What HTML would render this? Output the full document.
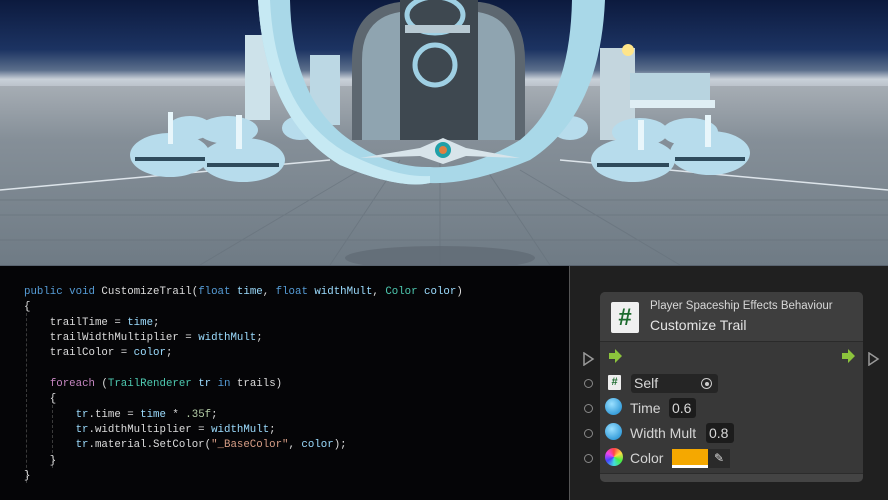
<!DOCTYPE html>
<html><head><meta charset="utf-8"><style>
*{margin:0;padding:0;box-sizing:border-box}
body{width:888px;height:500px;overflow:hidden;background:#000;position:relative;font-family:"Liberation Sans",sans-serif}
#scene{position:absolute;left:0;top:0;width:888px;height:265px}
#code{position:absolute;left:0;top:266px;width:569px;height:234px;background:#050507}
#graph{position:absolute;left:570px;top:266px;width:318px;height:234px;background:#202020}
#sep{position:absolute;left:0;top:265px;width:888px;height:1px;background:#5a6470}
#vsep{position:absolute;left:569px;top:266px;width:1px;height:234px;background:#555}
pre{position:absolute;left:24px;top:19px;font-family:"Liberation Mono",monospace;font-size:10.75px;line-height:15.35px;color:#dcdcdc}
.k{color:#569cd6}.t{color:#4ec9b0}.p{color:#c586c0}.v{color:#9cdcfe}.s{color:#d69d85}.n{color:#b5cea8}
.guide{position:absolute;border-left:1px dashed #3a3a3a}
.node{position:absolute;left:30px;top:26px;width:263px;height:190px;background:#383838;border-radius:5px;overflow:hidden}
.hdr{height:50px;background:#3e3e3e;border-bottom:1px solid #2a2a2a;position:relative}
.ico{position:absolute;left:11px;top:10px;width:28px;height:31px;background:#f0f0f0;border-radius:2px;color:#1d6b2e;font-weight:bold;font-size:24px;text-align:center;line-height:31px}
.t1{position:absolute;left:50px;top:8px;font-size:11.5px;color:#d8d8d8}
.t2{position:absolute;left:50px;top:25px;font-size:14px;color:#e4e4e4}
.row{position:absolute;font-size:14px;color:#d4d4d4}
.port{position:absolute;width:9px;height:9px;border:1.5px solid #888;border-radius:50%}
.fld{position:absolute;background:#252525;border-radius:3px;color:#d8d8d8;font-size:14px;padding-left:3px}
.ball{position:absolute;width:17px;height:17px;border-radius:50%;background:radial-gradient(circle at 40% 35%,#9be0ff,#3aa0dc 70%)}
</style></head><body>
<div id="scene">
<svg width="888" height="265" viewBox="0 0 888 265">
<defs>
<linearGradient id="sky" x1="0" y1="0" x2="0" y2="1">
<stop offset="0" stop-color="#0c1a3e"/><stop offset="0.55" stop-color="#1c3362"/><stop offset="0.78" stop-color="#5b6f8c"/><stop offset="0.88" stop-color="#c9d0d8"/><stop offset="1" stop-color="#b4bcc4"/></linearGradient>
<linearGradient id="gr" x1="0" y1="0" x2="0" y2="1"><stop offset="0" stop-color="#a6adb4"/><stop offset="0.3" stop-color="#858f98"/><stop offset="1" stop-color="#6f7b85"/></linearGradient>
</defs>
<rect width="888" height="90" fill="url(#sky)"/>
<rect y="86" width="888" height="179" fill="url(#gr)"/>
<g stroke="#66717b" stroke-width="1" opacity="0.6">
<line x1="0" y1="215" x2="888" y2="215"/><line x1="0" y1="240" x2="888" y2="240"/><line x1="0" y1="200" x2="888" y2="200"/>
<line x1="440" y1="160" x2="440" y2="265"/><line x1="400" y1="160" x2="330" y2="265"/><line x1="480" y1="160" x2="550" y2="265"/><line x1="360" y1="170" x2="200" y2="265"/><line x1="520" y1="170" x2="680" y2="265"/>
</g>
<line x1="0" y1="190" x2="330" y2="160" stroke="#dde4ea" stroke-width="1.5"/>
<line x1="888" y1="190" x2="560" y2="160" stroke="#dde4ea" stroke-width="1.5"/>
<ellipse cx="440" cy="258" rx="95" ry="12" fill="#5f6a73" opacity="0.7"/>
<!-- buildings -->
<rect x="245" y="35" width="25" height="85" fill="#cde2ea"/>
<rect x="310" y="55" width="30" height="70" fill="#bcd8e4"/>
<rect x="600" y="48" width="35" height="92" fill="#c4d6de"/>
<rect x="630" y="73" width="80" height="35" fill="#b8d4e0"/>
<rect x="630" y="100" width="85" height="8" fill="#dfeef4"/>
<circle cx="628" cy="50" r="6" fill="#ffe58a"/>
<path d="M352 140 L352 60 Q352 8 400 2 L480 2 Q525 8 525 60 L525 140 Z" fill="#5d6770"/>
<path d="M362 140 L362 60 Q362 18 400 12 L400 140 Z M515 140 L515 60 Q515 18 478 12 L478 140 Z" fill="#8fa4b0"/>
<rect x="400" y="0" width="78" height="140" fill="#3e4850"/>
<ellipse cx="435" cy="15" rx="28" ry="18" fill="none" stroke="#9fd0e4" stroke-width="5"/>
<ellipse cx="435" cy="65" rx="20" ry="20" fill="none" stroke="#9fd0e4" stroke-width="5"/>
<rect x="405" y="25" width="65" height="8" fill="#b7c9d2"/>
<!-- domes -->
<g fill="#b7dcec">
<ellipse cx="170" cy="155" rx="40" ry="22"/><ellipse cx="243" cy="160" rx="42" ry="22"/><ellipse cx="633" cy="160" rx="42" ry="22"/><ellipse cx="710" cy="153" rx="40" ry="22"/>
<ellipse cx="190" cy="128" rx="22" ry="12"/><ellipse cx="228" cy="130" rx="30" ry="14"/><ellipse cx="640" cy="132" rx="28" ry="14"/><ellipse cx="690" cy="132" rx="28" ry="14"/>
<ellipse cx="300" cy="128" rx="18" ry="12"/><ellipse cx="570" cy="128" rx="18" ry="12"/>
</g>
<g fill="#2f4b5c"><rect x="135" y="157" width="70" height="4"/><rect x="207" y="163" width="72" height="4"/><rect x="597" y="163" width="72" height="4"/><rect x="675" y="157" width="70" height="4"/></g>
<g fill="#e8f6fb"><rect x="168" y="112" width="5" height="32"/><rect x="236" y="115" width="6" height="34"/><rect x="638" y="120" width="6" height="30"/><rect x="705" y="115" width="6" height="32"/></g>
<!-- big ring -->
<path d="M258 0 Q265 120 340 165 Q400 190 430 183 Q470 185 530 160 Q600 115 605 0 L572 0 Q570 100 520 140 Q470 170 430 167 Q390 168 350 140 Q292 100 290 0 Z" fill="#a9d8e8"/>
<path d="M258 0 Q265 120 340 165 Q400 190 430 183 L430 176 Q395 178 345 152 Q275 110 270 0 Z" fill="#c6e9f3"/>
<!-- ship -->
<path d="M360 158 L420 148 L443 138 L466 148 L520 158 L466 156 L443 164 L420 156 Z" fill="#d8e4ea"/>
<circle cx="443" cy="150" r="8" fill="#20a0a8"/><circle cx="443" cy="150" r="4" fill="#e08040"/>
</svg>
</div>
<div id="sep"></div>
<div id="code">
<div class="guide" style="left:26px;top:42px;height:175px"></div>
<div class="guide" style="left:52px;top:134px;height:68px"></div>
<pre><span class="k">public</span> <span class="k">void</span> CustomizeTrail(<span class="k">float</span> <span class="v">time</span>, <span class="k">float</span> <span class="v">widthMult</span>, <span class="t">Color</span> <span class="v">color</span>)
{
    trailTime = <span class="v">time</span>;
    trailWidthMultiplier = <span class="v">widthMult</span>;
    trailColor = <span class="v">color</span>;

    <span class="p">foreach</span> (<span class="t">TrailRenderer</span> <span class="v">tr</span> <span class="k">in</span> trails)
    {
        <span class="v">tr</span>.time = <span class="v">time</span> * <span class="n">.35f</span>;
        <span class="v">tr</span>.widthMultiplier = <span class="v">widthMult</span>;
        <span class="v">tr</span>.material.SetColor(<span class="s">"_BaseColor"</span>, <span class="v">color</span>);
    }
}</pre>
</div>
<div id="vsep"></div>
<div id="graph">
<div class="node">
<div class="hdr"><div class="ico">#</div><div class="t1">Player Spaceship Effects Behaviour</div><div class="t2">Customize Trail</div></div>
<svg style="position:absolute;left:8px;top:57px" width="16" height="14"><path d="M1 4 H7 V0 L14 7 L7 14 V10 H1 Z" fill="#8cc43c"/></svg>
<svg style="position:absolute;left:241px;top:57px" width="16" height="14"><path d="M1 4 H7 V0 L14 7 L7 14 V10 H1 Z" fill="#8cc43c"/></svg>
<div style="position:absolute;left:8px;top:83px;width:13px;height:15px;background:#eee;border-radius:1px;color:#1d6b2e;font-size:11px;font-weight:bold;text-align:center;line-height:15px">#</div>
<div class="fld" style="left:31px;top:82px;width:87px;height:19px;line-height:19px">Self<span style="position:absolute;right:6px;top:4px;width:11px;height:11px;border:1.5px solid #ccc;border-radius:50%"></span><span style="position:absolute;right:9.5px;top:7.5px;width:4px;height:4px;background:#ccc;border-radius:50%"></span></div>
<div class="ball" style="left:5px;top:106px"></div><div class="row" style="left:30px;top:108px">Time</div>
<div class="fld" style="left:69px;top:106px;width:27px;height:20px;line-height:20px;background:#1c1c1c">0.6</div>
<div class="ball" style="left:5px;top:131px"></div><div class="row" style="left:30px;top:133px">Width Mult</div>
<div class="fld" style="left:106px;top:131px;width:28px;height:20px;line-height:20px;background:#1c1c1c">0.8</div>
<div style="position:absolute;left:5px;top:156px;width:18px;height:18px;border-radius:50%;background:conic-gradient(#f44,#fd4,#4e4,#4dd,#44f,#e4e,#f44)"></div>
<div class="row" style="left:30px;top:158px">Color</div>
<div style="position:absolute;left:72px;top:157px;width:36px;height:19px;background:#f5a800;border-bottom:3px solid #fff"></div>
<div style="position:absolute;left:108px;top:157px;width:22px;height:19px;background:#2a2a2a;color:#ddd;font-size:12px;text-align:center;line-height:19px">✎</div>
<div style="position:absolute;left:0;top:181px;width:263px;height:9px;background:#444;border-top:1px solid #2c2c2c"></div>
</div>
<svg style="position:absolute;left:13px;top:86px" width="12" height="14"><path d="M1 1 L10 7 L1 13 Z" fill="none" stroke="#999" stroke-width="1.5"/></svg>
<svg style="position:absolute;left:298px;top:86px" width="12" height="14"><path d="M1 1 L10 7 L1 13 Z" fill="none" stroke="#999" stroke-width="1.5"/></svg>
<div class="port" style="left:14px;top:113px"></div>
<div class="port" style="left:14px;top:138px"></div>
<div class="port" style="left:14px;top:163px"></div>
<div class="port" style="left:14px;top:188px"></div>
</div>
</body></html>
